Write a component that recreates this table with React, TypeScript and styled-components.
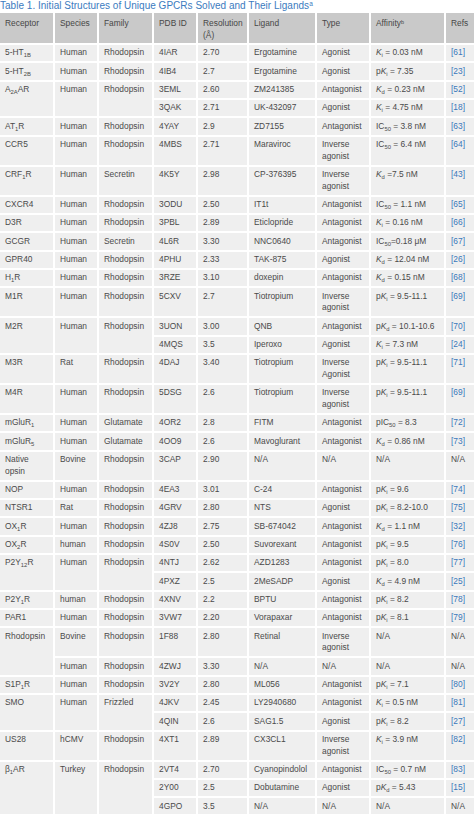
import React from 'react';
import styled, { createGlobalStyle } from 'styled-components';

const GlobalStyle = createGlobalStyle`
  html, body {
    margin: 0;
    padding: 0;
    background: #ffffff;
  }
  body {
    overflow: hidden;
    font-family: "Liberation Sans", Arial, Helvetica, sans-serif;
  }
`;

type Cell = { text: React.ReactNode; span?: number };

interface Entry {
  receptor?: Cell;
  species?: Cell;
  family?: Cell;
  pdb: string;
  resolution: string;
  ligand: string;
  type: React.ReactNode;
  affinity: React.ReactNode;
  ref: string;
}

const Sub = styled.sub`
  font-size: 0.7em;
  vertical-align: -0.3em;
  line-height: 0;
`;

const Sup = styled.sup`
  font-size: 0.65em;
  vertical-align: 0.45em;
  line-height: 0;
`;

const Italic = styled.i`
  font-style: italic;
`;

const c = (text: React.ReactNode, span = 1): Cell => ({ text, span });
const K = (sub: string) => (
  <>
    <Italic>K</Italic>
    <Sub>{sub}</Sub>
  </>
);
const pK = (sub: string) => <>p{K(sub)}</>;
const IC = (
  <>
    IC<Sub>50</Sub>
  </>
);
const inverse = (
  <>
    Inverse
    <br />
    agonist
  </>
);

const entries: Entry[] = [
  { receptor: c(<>5-HT<Sub>1B</Sub></>), species: c('Human'), family: c('Rhodopsin'), pdb: '4IAR', resolution: '2.70', ligand: 'Ergotamine', type: 'Agonist', affinity: <>{K('i')} = 0.03 nM</>, ref: '61' },
  { receptor: c(<>5-HT<Sub>2B</Sub></>), species: c('Human'), family: c('Rhodopsin'), pdb: '4IB4', resolution: '2.7', ligand: 'Ergotamine', type: 'Agonist', affinity: <>{pK('i')} = 7.35</>, ref: '23' },
  { receptor: c(<>A<Sub>2A</Sub>AR</>, 2), species: c('Human', 2), family: c('Rhodopsin', 2), pdb: '3EML', resolution: '2.60', ligand: 'ZM241385', type: 'Antagonist', affinity: <>{K('d')} = 0.23 nM</>, ref: '52' },
  { pdb: '3QAK', resolution: '2.71', ligand: 'UK-432097', type: 'Agonist', affinity: <>{K('i')} = 4.75 nM</>, ref: '18' },
  { receptor: c(<>AT<Sub>1</Sub>R</>), species: c('Human'), family: c('Rhodopsin'), pdb: '4YAY', resolution: '2.9', ligand: 'ZD7155', type: 'Antagonist', affinity: <>{IC} = 3.8 nM</>, ref: '63' },
  { receptor: c('CCR5'), species: c('Human'), family: c('Rhodopsin'), pdb: '4MBS', resolution: '2.71', ligand: 'Maraviroc', type: inverse, affinity: <>{IC} = 6.4 nM</>, ref: '64' },
  { receptor: c(<>CRF<Sub>1</Sub>R</>), species: c('Human'), family: c('Secretin'), pdb: '4K5Y', resolution: '2.98', ligand: 'CP-376395', type: inverse, affinity: <>{K('d')} =7.5 nM</>, ref: '43' },
  { receptor: c('CXCR4'), species: c('Human'), family: c('Rhodopsin'), pdb: '3ODU', resolution: '2.50', ligand: 'IT1t', type: 'Antagonist', affinity: <>{IC} = 1.1 nM</>, ref: '65' },
  { receptor: c('D3R'), species: c('Human'), family: c('Rhodopsin'), pdb: '3PBL', resolution: '2.89', ligand: 'Eticlopride', type: 'Antagonist', affinity: <>{K('i')} = 0.16 nM</>, ref: '66' },
  { receptor: c('GCGR'), species: c('Human'), family: c('Secretin'), pdb: '4L6R', resolution: '3.30', ligand: 'NNC0640', type: 'Antagonist', affinity: <>{IC}=0.18 μM</>, ref: '67' },
  { receptor: c('GPR40'), species: c('Human'), family: c('Rhodopsin'), pdb: '4PHU', resolution: '2.33', ligand: 'TAK-875', type: 'Agonist', affinity: <>{K('d')} = 12.04 nM</>, ref: '26' },
  { receptor: c(<>H<Sub>1</Sub>R</>), species: c('Human'), family: c('Rhodopsin'), pdb: '3RZE', resolution: '3.10', ligand: 'doxepin', type: 'Antagonist', affinity: <>{K('d')} = 0.15 nM</>, ref: '68' },
  { receptor: c('M1R'), species: c('Human'), family: c('Rhodopsin'), pdb: '5CXV', resolution: '2.7', ligand: 'Tiotropium', type: inverse, affinity: <>{pK('i')} = 9.5-11.1</>, ref: '69' },
  { receptor: c('M2R', 2), species: c('Human', 2), family: c('Rhodopsin', 2), pdb: '3UON', resolution: '3.00', ligand: 'QNB', type: 'Antagonist', affinity: <>{pK('d')} = 10.1-10.6</>, ref: '70' },
  { pdb: '4MQS', resolution: '3.5', ligand: 'Iperoxo', type: 'Agonist', affinity: <>{K('i')} = 7.3 nM</>, ref: '24' },
  { receptor: c('M3R'), species: c('Rat'), family: c('Rhodopsin'), pdb: '4DAJ', resolution: '3.40', ligand: 'Tiotropium', type: <>Inverse<br />Agonist</>, affinity: <>{pK('i')} = 9.5-11.1</>, ref: '71' },
  { receptor: c('M4R'), species: c('Human'), family: c('Rhodopsin'), pdb: '5DSG', resolution: '2.6', ligand: 'Tiotropium', type: inverse, affinity: <>{pK('i')} = 9.5-11.1</>, ref: '69' },
  { receptor: c(<>mGluR<Sub>1</Sub></>), species: c('Human'), family: c('Glutamate'), pdb: '4OR2', resolution: '2.8', ligand: 'FITM', type: 'Antagonist', affinity: <>pIC<Sub>50</Sub> = 8.3</>, ref: '72' },
  { receptor: c(<>mGluR<Sub>5</Sub></>), species: c('Human'), family: c('Glutamate'), pdb: '4OO9', resolution: '2.6', ligand: 'Mavoglurant', type: 'Antagonist', affinity: <>{K('d')} = 0.86 nM</>, ref: '73' },
  { receptor: c(<>Native<br />opsin</>), species: c('Bovine'), family: c('Rhodopsin'), pdb: '3CAP', resolution: '2.90', ligand: 'N/A', type: 'N/A', affinity: 'N/A', ref: 'N/A' },
  { receptor: c('NOP'), species: c('Human'), family: c('Rhodopsin'), pdb: '4EA3', resolution: '3.01', ligand: 'C-24', type: 'Antagonist', affinity: <>{pK('i')} = 9.6</>, ref: '74' },
  { receptor: c('NTSR1'), species: c('Rat'), family: c('Rhodopsin'), pdb: '4GRV', resolution: '2.80', ligand: 'NTS', type: 'Agonist', affinity: <>{pK('i')} = 8.2-10.0</>, ref: '75' },
  { receptor: c(<>OX<Sub>1</Sub>R</>), species: c('Human'), family: c('Rhodopsin'), pdb: '4ZJ8', resolution: '2.75', ligand: 'SB-674042', type: 'Antagonist', affinity: <>{K('d')} = 1.1 nM</>, ref: '32' },
  { receptor: c(<>OX<Sub>2</Sub>R</>), species: c('human'), family: c('Rhodopsin'), pdb: '4S0V', resolution: '2.50', ligand: 'Suvorexant', type: 'Antagonist', affinity: <>{pK('i')} = 9.5</>, ref: '76' },
  { receptor: c(<>P2Y<Sub>12</Sub>R</>, 2), species: c('Human', 2), family: c('Rhodopsin', 2), pdb: '4NTJ', resolution: '2.62', ligand: 'AZD1283', type: 'Antagonist', affinity: <>{pK('i')} = 8.0</>, ref: '77' },
  { pdb: '4PXZ', resolution: '2.5', ligand: '2MeSADP', type: 'Agonist', affinity: <>{K('d')} = 4.9 nM</>, ref: '25' },
  { receptor: c(<>P2Y<Sub>1</Sub>R</>), species: c('human'), family: c('Rhodopsin'), pdb: '4XNV', resolution: '2.2', ligand: 'BPTU', type: 'Antagonist', affinity: <>{pK('i')} = 8.2</>, ref: '78' },
  { receptor: c('PAR1'), species: c('Human'), family: c('Rhodopsin'), pdb: '3VW7', resolution: '2.20', ligand: 'Vorapaxar', type: 'Antagonist', affinity: <>{pK('i')} = 8.1</>, ref: '79' },
  { receptor: c('Rhodopsin', 2), species: c('Bovine'), family: c('Rhodopsin'), pdb: '1F88', resolution: '2.80', ligand: 'Retinal', type: inverse, affinity: 'N/A', ref: 'N/A' },
  { species: c('Human'), family: c('Rhodopsin'), pdb: '4ZWJ', resolution: '3.30', ligand: 'N/A', type: 'N/A', affinity: 'N/A', ref: 'N/A' },
  { receptor: c(<>S1P<Sub>1</Sub>R</>), species: c('Human'), family: c('Rhodopsin'), pdb: '3V2Y', resolution: '2.80', ligand: 'ML056', type: 'Antagonist', affinity: <>{pK('i')} = 7.1</>, ref: '80' },
  { receptor: c('SMO', 2), species: c('Human', 2), family: c('Frizzled', 2), pdb: '4JKV', resolution: '2.45', ligand: 'LY2940680', type: 'Antagonist', affinity: <>{K('i')} = 0.5 nM</>, ref: '81' },
  { pdb: '4QIN', resolution: '2.6', ligand: 'SAG1.5', type: 'Agonist', affinity: <>{pK('i')} = 8.2</>, ref: '27' },
  { receptor: c('US28'), species: c('hCMV'), family: c('Rhodopsin'), pdb: '4XT1', resolution: '2.89', ligand: 'CX3CL1', type: inverse, affinity: <>{K('i')} = 3.9 nM</>, ref: '82' },
  { receptor: c(<>β<Sub>1</Sub>AR</>, 3), species: c('Turkey', 3), family: c('Rhodopsin', 3), pdb: '2VT4', resolution: '2.70', ligand: 'Cyanopindolol', type: 'Antagonist', affinity: <>{IC} = 0.7 nM</>, ref: '83' },
  { pdb: '2Y00', resolution: '2.5', ligand: 'Dobutamine', type: 'Agonist', affinity: <>{pK('d')} = 5.43</>, ref: '15' },
  { pdb: '4GPO', resolution: '3.5', ligand: 'N/A', type: 'N/A', affinity: 'N/A', ref: 'N/A' },
];

const columns = [53, 42, 53, 42, 49, 66, 52, 73, 28];

const Page = styled.div`
  width: 474px;
  overflow: hidden;
`;

const Caption = styled.div`
  font-size: 10px;
  line-height: 11px;
  color: #3b7bc0;
  white-space: nowrap;
  letter-spacing: 0.02px;
`;

const Table = styled.table`
  width: 478px;
  margin: 0 -2px;
  border-collapse: separate;
  border-spacing: 2px;
  table-layout: fixed;
  font-size: 8.4px;
  line-height: 11.67px;
  color: #4a4a4a;
`;

const Col = styled.col<{ $w: number }>`
  width: ${(p) => p.$w}px;
`;

const HeadCell = styled.th`
  background: #c9c9c9;
  font-weight: normal;
  text-align: left;
  vertical-align: top;
  padding: 4px 2px 2px 5px;
  line-height: 12px;
  color: #474747;
`;

const BodyCell = styled.td`
  background: #efefef;
  vertical-align: top;
  padding: 2.33px 2px 2.33px 5px;
  white-space: nowrap;
`;

const RefLink = styled.span<{ $na: boolean }>`
  color: ${(p) => (p.$na ? '#4a4a4a' : '#3a78bb')};
`;

const headers: React.ReactNode[] = [
  'Receptor',
  'Species',
  'Family',
  'PDB ID',
  <>
    Resolution
    <br />
    (Å)
  </>,
  'Ligand',
  'Type',
  <>
    Affinity<Sup>b</Sup>
  </>,
  'Refs',
];

const App: React.FC = () => {
  return (
    <Page>
      <GlobalStyle />
      <Caption>
        Table 1. Initial Structures of Unique GPCRs Solved and Their Ligands<Sup>a</Sup>
      </Caption>
      <Table>
        <colgroup>
          {columns.map((w, i) => (
            <Col key={i} $w={w} />
          ))}
        </colgroup>
        <thead>
          <tr>
            {headers.map((h, i) => (
              <HeadCell key={i}>{h}</HeadCell>
            ))}
          </tr>
        </thead>
        <tbody>
          {entries.map((e, i) => (
            <tr key={i}>
              {e.receptor && <BodyCell rowSpan={e.receptor.span}>{e.receptor.text}</BodyCell>}
              {e.species && <BodyCell rowSpan={e.species.span}>{e.species.text}</BodyCell>}
              {e.family && <BodyCell rowSpan={e.family.span}>{e.family.text}</BodyCell>}
              <BodyCell>{e.pdb}</BodyCell>
              <BodyCell>{e.resolution}</BodyCell>
              <BodyCell>{e.ligand}</BodyCell>
              <BodyCell>{e.type}</BodyCell>
              <BodyCell>{e.affinity}</BodyCell>
              <BodyCell>
                <RefLink $na={e.ref === 'N/A'}>{e.ref === 'N/A' ? 'N/A' : `[${e.ref}]`}</RefLink>
              </BodyCell>
            </tr>
          ))}
        </tbody>
      </Table>
    </Page>
  );
};

export default App;
